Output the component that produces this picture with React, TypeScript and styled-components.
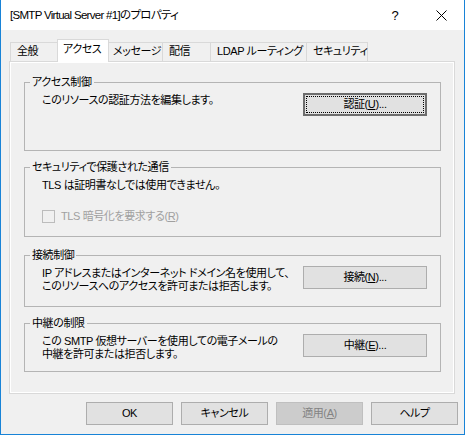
import React from "react";
import styled, { createGlobalStyle, css } from "styled-components";

const FONT = `"Liberation Sans", "Noto Sans CJK JP", sans-serif`;

const Global = createGlobalStyle`
  html, body { margin: 0; padding: 0; background: #ffffff; }
  body { font-family: ${FONT}; font-size: 11px; color: #000; }
  * { box-sizing: border-box; }
`;

const Window = styled.div`
  width: 465px;
  height: 435px;
  border: 1px solid #1883d7;
  border-top: none;
  background: #f0f0f0;
  display: flex;
  flex-direction: column;
  font-family: ${FONT};
  font-size: 11px;
  letter-spacing: -0.4px;
  font-feature-settings: "palt";
  color: #000;
`;

const TitleBar = styled.div`
  height: 30px;
  flex: none;
  background: #ffffff;
  display: flex;
  align-items: center;
  padding-left: 9px;
`;

const Title = styled.div`
  flex: 1;
  font-size: 11.5px;
  letter-spacing: -0.7px;
  line-height: 16px;
  white-space: nowrap;
`;

const CaptionButton = styled.div`
  width: 46px;
  height: 30px;
  display: flex;
  align-items: center;
  justify-content: center;
  font-size: 13px;
  color: #000;
`;

const Body = styled.div`
  flex: 1;
  display: flex;
  flex-direction: column;
  padding: 9px 6px 0 8px;
`;

const TabStrip = styled.div`
  height: 22px;
  display: flex;
  align-items: flex-end;
  padding-left: 1px;
  position: relative;
  z-index: 1;
`;

const Tab = styled.div<{ $w: number; $active?: boolean }>`
  width: ${(p) => p.$w}px;
  height: 19px;
  margin-left: -1px;
  padding-left: 6px;
  border: 1px solid #d9d9d9;
  border-bottom: none;
  background: #f0f0f0;
  line-height: 17px;
  white-space: nowrap;
  &:first-child { margin-left: 0; }
  ${(p) =>
    p.$active &&
    css`
      height: 23px;
      margin-left: -3px;
      margin-right: -2px;
      margin-bottom: -1px;
      padding-left: 5px;
      background: #ffffff;
      line-height: 19px;
      position: relative;
      z-index: 2;
    `}
`;

const Panel = styled.div`
  width: 446px;
  height: 333px;
  border: 1px solid #d9d9d9;
  box-shadow: inset 1px 1px 0 #ffffff, inset -1px -1px 0 #ffffff;
  background: #f0f0f0;
  display: flex;
  flex-direction: column;
  padding: 12px 0 0 14px;
`;

const Group = styled.fieldset<{ $h: number; $mt?: number }>`
  width: 417px;
  height: ${(p) => p.$h}px;
  margin: ${(p) => p.$mt ?? 0}px 0 0 0;
  padding: 3px 13px 0 5px;
  border: 1px solid #b4b4b4;
  min-inline-size: 0;
`;

const Legend = styled.legend`
  padding: 0 2px;
  line-height: 16px;
`;

const Row = styled.div`
  display: flex;
  justify-content: space-between;
  align-items: flex-start;
  padding-left: 12px;
`;

const Text = styled.div`
  line-height: 12.5px;
  padding-top: 1px;
  white-space: nowrap;
`;

const CheckRow = styled.label<{ $mt: number }>`
  display: flex;
  align-items: center;
  gap: 6px;
  margin-top: ${(p) => p.$mt}px;
  padding-left: 12px;
  line-height: 13px;
  color: #a0a0a0;
`;

const CheckBox = styled.span`
  width: 13px;
  height: 13px;
  flex: none;
  border: 1px solid #bcbcbc;
  background: #f0f0f0;
`;

const Button = styled.div<{ $w: number; $default?: boolean; $disabled?: boolean }>`
  width: ${(p) => p.$w}px;
  height: 23px;
  flex: none;
  display: flex;
  align-items: center;
  justify-content: center;
  background: #e1e1e1;
  border: 1px solid #adadad;
  line-height: 13px;
  white-space: nowrap;
  ${(p) =>
    p.$default &&
    css`
      border: 2px solid #6d6d6d;
      position: relative;
      &::after {
        content: "";
        position: absolute;
        inset: 1px;
        border: 1px dotted #000;
      }
    `}
  ${(p) =>
    p.$disabled &&
    css`
      background: #cccccc;
      border-color: #bfbfbf;
      color: #838383;
    `}
`;

const Key = styled.u`
  text-decoration: underline;
  text-underline-offset: 1px;
`;

const Footer = styled.div`
  display: flex;
  justify-content: flex-end;
  gap: 8px;
  margin-top: 8px;
`;

export default function App() {
  return (
    <>
      <Global />
      <Window>
        <TitleBar>
          <Title>[SMTP Virtual Server #1]のプロパティ</Title>
          <CaptionButton>?</CaptionButton>
          <CaptionButton>
            <svg width="11" height="11" viewBox="0 0 11 11">
              <path d="M0.5 0.5 L10.5 10.5 M10.5 0.5 L0.5 10.5" stroke="#000" strokeWidth="1" />
            </svg>
          </CaptionButton>
        </TitleBar>
        <Body>
          <TabStrip>
            <Tab $w={50}>全般</Tab>
            <Tab $w={52} $active>アクセス</Tab>
            <Tab $w={57}>メッセージ</Tab>
            <Tab $w={49}>配信</Tab>
            <Tab $w={97}>LDAP ルーティング</Tab>
            <Tab $w={62}>セキュリティ</Tab>
          </TabStrip>
          <Panel>
            <Group $h={77}>
              <Legend>アクセス制御</Legend>
              <Row>
                <Text>このリソースの認証方法を編集します。</Text>
                <Button $w={124} $default>
                  認証(<Key>U</Key>)...
                </Button>
              </Row>
            </Group>
            <Group $h={78} $mt={8}>
              <Legend>セキュリティで保護された通信</Legend>
              <Row>
                <Text>TLS は証明書なしでは使用できません。</Text>
              </Row>
              <CheckRow $mt={18}>
                <CheckBox />
                <span>
                  TLS 暗号化を要求する(<Key>R</Key>)
                </span>
              </CheckRow>
            </Group>
            <Group $h={60} $mt={10}>
              <Legend>接続制御</Legend>
              <Row>
                <Text>
                  IP アドレスまたはインターネット ドメイン名を使用して、
                  <br />
                  このリソースへのアクセスを許可または拒否します。
                </Text>
                <Button $w={124}>
                  接続(<Key>N</Key>)...
                </Button>
              </Row>
            </Group>
            <Group $h={57} $mt={8}>
              <Legend>中継の制限</Legend>
              <Row>
                <Text>
                  この SMTP 仮想サーバーを使用しての電子メールの
                  <br />
                  中継を許可または拒否します。
                </Text>
                <Button $w={124}>
                  中継(<Key>E</Key>)...
                </Button>
              </Row>
            </Group>
          </Panel>
          <Footer>
            <Button $w={87}>OK</Button>
            <Button $w={87}>キャンセル</Button>
            <Button $w={87} $disabled>
              適用(<Key>A</Key>)
            </Button>
            <Button $w={87}>ヘルプ</Button>
          </Footer>
        </Body>
      </Window>
    </>
  );
}
